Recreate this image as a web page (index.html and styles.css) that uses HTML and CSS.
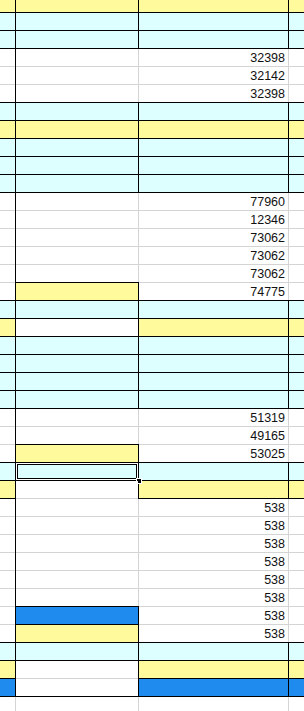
FILE: index.html
```html
<!DOCTYPE html>
<html lang="en">
<head>
<meta charset="utf-8">
<title>Sheet</title>
<link rel="stylesheet" href="styles.css">
</head>
<body>
<div class="sheet">
  <!-- row 0 -->
  <div class="cell y"></div><div class="cell y"></div><div class="cell y"></div><div class="cell y"></div>
  <!-- 1-2 -->
  <div class="cell c"></div><div class="cell c"></div><div class="cell c"></div><div class="cell c"></div>
  <div class="cell c"></div><div class="cell c"></div><div class="cell c"></div><div class="cell c"></div>
  <!-- 3-5 -->
  <div class="cell"></div><div class="cell bl"></div><div class="cell n">32398</div><div class="cell"></div>
  <div class="cell"></div><div class="cell bl"></div><div class="cell n">32142</div><div class="cell"></div>
  <div class="cell"></div><div class="cell bl"></div><div class="cell n">32398</div><div class="cell"></div>
  <!-- 6 -->
  <div class="cell c"></div><div class="cell c"></div><div class="cell c"></div><div class="cell c"></div>
  <!-- 7 -->
  <div class="cell y"></div><div class="cell y"></div><div class="cell y"></div><div class="cell y"></div>
  <!-- 8-10 -->
  <div class="cell c"></div><div class="cell c"></div><div class="cell c"></div><div class="cell c"></div>
  <div class="cell c"></div><div class="cell c"></div><div class="cell c"></div><div class="cell c"></div>
  <div class="cell c"></div><div class="cell c"></div><div class="cell c"></div><div class="cell c"></div>
  <!-- 11-15 -->
  <div class="cell"></div><div class="cell bl"></div><div class="cell n">77960</div><div class="cell"></div>
  <div class="cell"></div><div class="cell bl"></div><div class="cell n">12346</div><div class="cell"></div>
  <div class="cell"></div><div class="cell bl"></div><div class="cell n">73062</div><div class="cell"></div>
  <div class="cell"></div><div class="cell bl"></div><div class="cell n">73062</div><div class="cell"></div>
  <div class="cell"></div><div class="cell bl"></div><div class="cell n">73062</div><div class="cell"></div>
  <!-- 16 -->
  <div class="cell"></div><div class="cell y"></div><div class="cell n">74775</div><div class="cell"></div>
  <!-- 17 -->
  <div class="cell c"></div><div class="cell c"></div><div class="cell c"></div><div class="cell c"></div>
  <!-- 18 -->
  <div class="cell y"></div><div class="cell bl"></div><div class="cell y"></div><div class="cell y"></div>
  <!-- 19-22 -->
  <div class="cell c"></div><div class="cell c"></div><div class="cell c"></div><div class="cell c"></div>
  <div class="cell c"></div><div class="cell c"></div><div class="cell c"></div><div class="cell c"></div>
  <div class="cell c"></div><div class="cell c"></div><div class="cell c"></div><div class="cell c"></div>
  <div class="cell c"></div><div class="cell c"></div><div class="cell c"></div><div class="cell c"></div>
  <!-- 23-24 -->
  <div class="cell"></div><div class="cell bl"></div><div class="cell n">51319</div><div class="cell"></div>
  <div class="cell"></div><div class="cell bl"></div><div class="cell n">49165</div><div class="cell"></div>
  <!-- 25 -->
  <div class="cell"></div><div class="cell y"></div><div class="cell n">53025</div><div class="cell"></div>
  <!-- 26 selected -->
  <div class="cell c"></div><div class="cell c sel"></div><div class="cell c"></div><div class="cell c"></div>
  <!-- 27 -->
  <div class="cell y"></div><div class="cell bl"></div><div class="cell y"></div><div class="cell y"></div>
  <!-- 28-33 -->
  <div class="cell"></div><div class="cell bl"></div><div class="cell n">538</div><div class="cell"></div>
  <div class="cell"></div><div class="cell bl"></div><div class="cell n">538</div><div class="cell"></div>
  <div class="cell"></div><div class="cell bl"></div><div class="cell n">538</div><div class="cell"></div>
  <div class="cell"></div><div class="cell bl"></div><div class="cell n">538</div><div class="cell"></div>
  <div class="cell"></div><div class="cell bl"></div><div class="cell n">538</div><div class="cell"></div>
  <div class="cell"></div><div class="cell bl"></div><div class="cell n">538</div><div class="cell"></div>
  <!-- 34 -->
  <div class="cell"></div><div class="cell b"></div><div class="cell n">538</div><div class="cell"></div>
  <!-- 35 -->
  <div class="cell"></div><div class="cell y"></div><div class="cell n">538</div><div class="cell"></div>
  <!-- 36 -->
  <div class="cell c"></div><div class="cell c"></div><div class="cell c"></div><div class="cell c"></div>
  <!-- 37 -->
  <div class="cell y"></div><div class="cell bl"></div><div class="cell y"></div><div class="cell y"></div>
  <!-- 38 -->
  <div class="cell b"></div><div class="cell bl bb"></div><div class="cell b"></div><div class="cell b"></div>
  <!-- 39 -->
  <div class="cell"></div><div class="cell"></div><div class="cell"></div><div class="cell"></div>
</div>
</body>
</html>
```
FILE: styles.css
```css
html, body {
  margin: 0;
  padding: 0;
  overflow: hidden;
  background: #ffffff;
}

.sheet {
  display: grid;
  grid-template-columns: 15px 122px 149px 15px;
  grid-template-rows: 12px repeat(39, 17px);
  gap: 1px;
  background: #d4d4d4;
  width: 304px;
  font-family: "Liberation Sans", Arial, sans-serif;
  font-size: 12.5px;
  color: #111;
}

.cell {
  background: #ffffff;
  box-sizing: border-box;
}

.c {
  background: #ddffff;
  box-shadow: 0 0 0 1px #000;
}

.y {
  background: #fffb9c;
  box-shadow: 0 0 0 1px #000;
}

.b {
  background: #1f8bef;
  box-shadow: 0 0 0 1px #000;
}

.bl {
  position: relative;
}

.bl::before {
  content: "";
  position: absolute;
  left: -1px;
  top: -1px;
  bottom: -1px;
  width: 1px;
  background: #000;
}

.bb {
  box-shadow: 0 1px 0 #000;
}

.n {
  text-align: right;
  padding: 2px 3px 0 0;
  line-height: 15px;
}

.sel {
  position: relative;
  box-shadow: 0 0 0 1px #000, inset 0 0 0 1px #fff, inset 0 0 0 2px #000;
}

.sel::after {
  content: "";
  position: absolute;
  right: -4px;
  bottom: -4px;
  width: 4px;
  height: 4px;
  background: #000;
  border: 1px solid #fff;
}
```
